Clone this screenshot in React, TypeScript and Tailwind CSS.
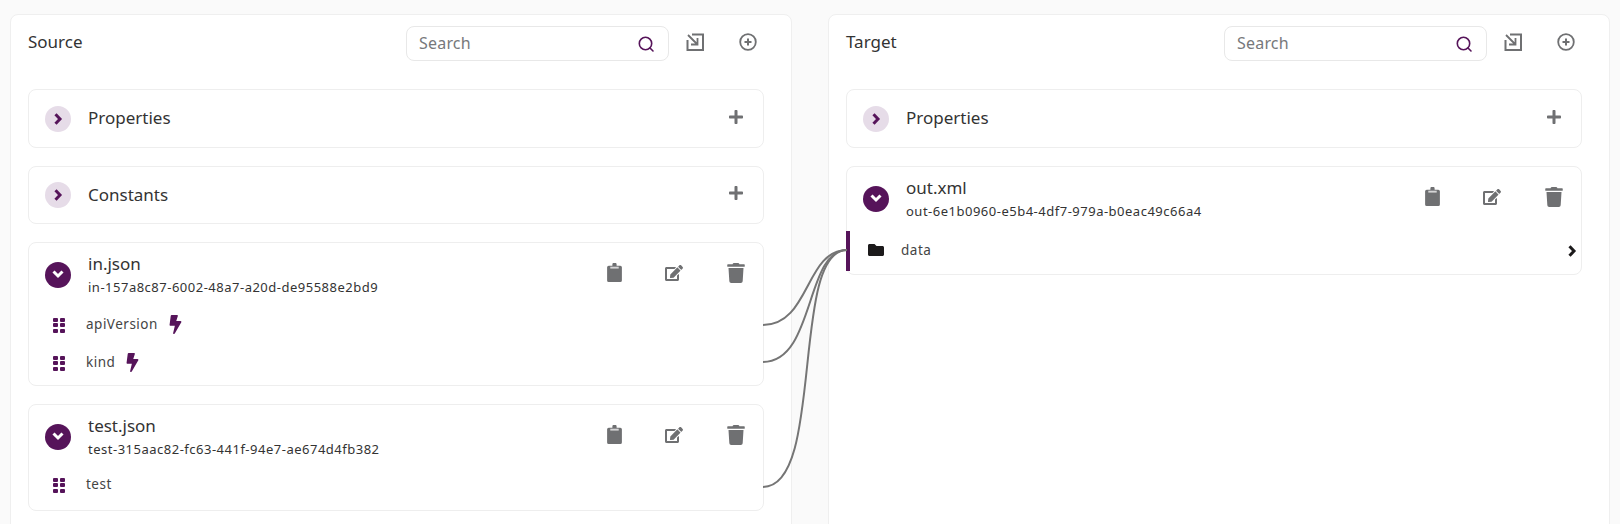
import { FaBolt, FaEdit, FaFolder, FaPlus, FaTrash } from "react-icons/fa";

const curves = [
    "M763 325 C 810 325, 805 250, 847 250",
    "M763 362 C 815 362, 805 250, 847 250",
    "M763 487 C 825 487, 790 250, 847 250",
];

function SearchIcon() {
    return (
        <svg width="18" height="18" viewBox="0 0 18 18" fill="none" stroke="#56145a" strokeWidth="1.6" strokeLinecap="round">
            <circle cx="8.5" cy="8.5" r="6.2" />
            <path d="M13 13l3 3" />
        </svg>
    );
}

function ImportIcon() {
    return (
        <svg width="18" height="18" viewBox="0 0 18 18" fill="none" stroke="#6f7072" strokeWidth="2">
            <path d="M6 1.5h11v15.500H1.500V7" />
            <path d="M2 2l9 9M5 11.500h6.500V5" strokeWidth="1.800" />
        </svg>
    );
}

function CirclePlusIcon() {
    return (
        <svg width="18" height="18" viewBox="0 0 18 18" fill="none" stroke="#6f7072">
            <circle cx="9" cy="9" r="7.800" strokeWidth="1.800" />
            <path d="M9 5.500v7M5.500 9h7" strokeWidth="2" />
        </svg>
    );
}

function ClipboardIcon() {
    return (
        <svg width="15" height="19" viewBox="0 0 14 18">
            <path d="M5 2.500V1.500a2 2 0 0 1 4 0v1h3.500A1.500 1.500 0 0 1 14 4v12.500a1.500 1.500 0 0 1-1.500 1.500h-11A1.500 1.500 0 0 1 0 16.500V4a1.500 1.500 0 0 1 1.500-1.500z" fill="#6f7072" />
            <rect x="3" y="3.500" width="8" height="1.800" fill="#d5d5d6" />
        </svg>
    );
}

function ChevronRight({ color }: { color: string }) {
    return (
        <svg width="10" height="12" viewBox="0 0 10 12" fill="none" stroke={color} strokeWidth="3">
            <path d="M2.500 1.200l4.500 4.800-4.500 4.800" />
        </svg>
    );
}

function ChevronDown() {
    return (
        <svg width="12" height="9" viewBox="0 0 12 9" fill="none" stroke="#ffffff" strokeWidth="3">
            <path d="M1.500 1.500l4.500 4.500 4.500-4.500" />
        </svg>
    );
}

function GripIcon() {
    return (
        <div className="grid grid-cols-2 gap-x-[2px] gap-y-[1.500px] w-[12px]">
            {[0, 1, 2, 3, 4, 5].map((i) => (
                <span key={i} className="w-[5px] h-[4px] rounded-[1px] bg-[#56145a]" />
            ))}
        </div>
    );
}

function Panel({ title, children }: { title: string; children: React.ReactNode }) {
    return (
        <div className="flex-1 h-[600px] bg-white border border-[#efefef] rounded-lg pl-[18px] pr-[27px]">
            <div className="flex items-center h-[53px] mt-[2px] mb-[19px]">
                <span className="text-[17px] text-[#333] -mt-[3px] -ml-px">{title}</span>
                <div className="ml-auto flex items-center w-[263px] h-[35px] bg-white border border-[#e8e8e8] rounded-lg pl-3 pr-[13px]">
                    <span className="text-base text-[#77787b] tracking-[0.2px] -mt-[1px]">Search</span>
                    <span className="ml-auto"><SearchIcon /></span>
                </div>
                <span className="ml-[17px] -mt-[4px]"><ImportIcon /></span>
                <span className="ml-[35px] mr-[7px] -mt-[4px]"><CirclePlusIcon /></span>
            </div>
            <div className="flex flex-col gap-[18px] -ml-px">{children}</div>
        </div>
    );
}

function CollapsedCard({ label, h }: { label: string; h: string }) {
    return (
        <div className={`flex items-center border border-[#eeeeee] rounded-lg pl-[16px] pr-[19px] ${h}`}>
            <span className="flex items-center justify-center w-[26px] h-[26px] rounded-full bg-[#e6dce8]">
                <ChevronRight color="#56145a" />
            </span>
            <span className="ml-[17px] text-[17px] text-[#333] -mt-[1px]">{label}</span>
            <FaPlus className="ml-auto -mt-[4px] text-[#6f7072]" size={16} />
        </div>
    );
}

function FileHeader({ name, id }: { name: string; id: string }) {
    return (
        <div className="flex items-center h-[63px] pl-[16px] pr-[17px]">
            <span className="flex items-center justify-center w-[26px] h-[26px] rounded-full bg-[#56145a]">
                <ChevronDown />
            </span>
            <div className="ml-[17px] flex flex-col gap-[4px]">
                <span className="text-[17px] leading-[22px] text-[#333]">{name}</span>
                <span className="text-[13px] leading-[17px] text-[#333] tracking-[0.5px]">{id}</span>
            </div>
            <div className="ml-auto flex items-center gap-[43px] -mt-[4px]">
                <ClipboardIcon />
                <FaEdit className="text-[#6f7072]" size={18} />
                <FaTrash className="text-[#6f7072]" size={20} />
            </div>
        </div>
    );
}

function FieldRow({ label, bolt }: { label: string; bolt?: boolean }) {
    return (
        <div className="flex items-center h-[38px] pl-[24px]">
            <GripIcon />
            <span className="ml-[21px] -mt-[2px] text-[13.500px] text-[#444] tracking-[0.5px]">{label}</span>
            {bolt && <FaBolt className="ml-[8px] -mt-[1px] text-[#56145a]" size={19} />}
        </div>
    );
}

export default function App() {
    return (
        <div className="relative h-[524px] overflow-hidden bg-[#fafafa] font-['Noto_Sans','Open_Sans',sans-serif]">
            <div className="flex gap-[36px] pt-[14px] pl-[10px] pr-[10px]">
                <Panel title="Source">
                    <CollapsedCard label="Properties" h="h-[59px]" />
                    <CollapsedCard label="Constants" h="h-[58px]" />
                    <div className="border border-[#eeeeee] rounded-lg h-[144px]">
                        <FileHeader name="in.json" id="in-157a8c87-6002-48a7-a20d-de95588e2bd9" />
                        <FieldRow label="apiVersion" bolt />
                        <FieldRow label="kind" bolt />
                    </div>
                    <div className="border border-[#eeeeee] rounded-lg h-[107px]">
                        <FileHeader name="test.json" id="test-315aac82-fc63-441f-94e7-ae674d4fb382" />
                        <div className="-mt-[2px]"><FieldRow label="test" /></div>
                    </div>
                </Panel>
                <Panel title="Target">
                    <CollapsedCard label="Properties" h="h-[59px]" />
                    <div className="border border-[#eeeeee] rounded-lg h-[109px]">
                        <FileHeader name="out.xml" id="out-6e1b0960-e5b4-4df7-979a-b0eac49c66a4" />
                        <div className="flex items-center h-[40px] mt-[1px] -ml-px border-l-4 border-[#56145a] pl-[18px] pr-[4px]">
                            <FaFolder className="text-[#1c1a1b] -mt-[3px]" size={16} />
                            <span className="ml-[17px] -mt-[2px] text-[13.500px] text-[#444] tracking-[0.5px]">data</span>
                            <span className="ml-auto"><ChevronRight color="#1c1a1b" /></span>
                        </div>
                    </div>
                </Panel>
            </div>
            {/* connection lines between the two panels */}
            <svg className="absolute inset-0 pointer-events-none" width="1620" height="524" fill="none" stroke="#757575" strokeWidth="2">
                {curves.map((d) => (
                    <path key={d} d={d} />
                ))}
            </svg>
        </div>
    );
}
